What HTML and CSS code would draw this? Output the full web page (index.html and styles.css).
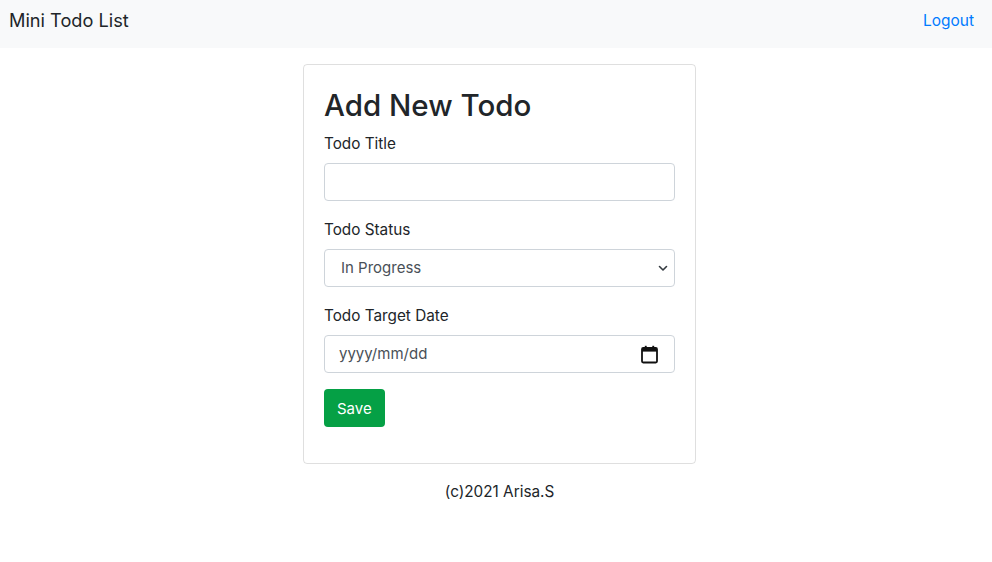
FILE: index.html
```html
<!DOCTYPE html>
<html lang="en">
<head>
<meta charset="utf-8">
<title>Mini Todo List</title>
<link rel="stylesheet" href="styles.css">
</head>
<body>
<nav class="navbar">
  <a class="brand" href="#">Mini Todo List</a>
  <a class="nav-link" href="#">Logout</a>
</nav>
<main class="main">
  <div class="card">
    <h1 class="title">Add New Todo</h1>
    <form class="form">
      <div class="form-group">
        <label class="label">Todo Title</label>
        <div class="control"></div>
      </div>
      <div class="form-group">
        <label class="label">Todo Status</label>
        <div class="control select">
          <span>In Progress</span>
          <svg class="chevron" width="10" height="8" viewBox="0 0 10 8"><path d="M1.5 2.5 L5 6 L8.5 2.5" fill="none" stroke="#343a40" stroke-width="1.6" stroke-linecap="round" stroke-linejoin="round"/></svg>
        </div>
      </div>
      <div class="form-group">
        <label class="label">Todo Target Date</label>
        <div class="control date">
          <span>yyyy/mm/dd</span>
          <svg class="cal" width="17" height="19" viewBox="0 0 17 19"><rect x="1" y="3" width="15" height="14.5" rx="1.2" fill="none" stroke="#111" stroke-width="1.8"/><rect x="1" y="3" width="15" height="3.6" fill="#111"/><rect x="3.8" y="0.8" width="1.9" height="3" fill="#111"/><rect x="11.3" y="0.8" width="1.9" height="3" fill="#111"/></svg>
        </div>
      </div>
      <button type="button" class="btn">Save</button>
    </form>
  </div>
  <footer class="footer">(c)2021 Arisa.S</footer>
</main>
</body>
</html>
```
FILE: styles.css
```css
* { box-sizing: border-box; }
body {
  margin: 0;
  font-family: Inter, "Liberation Sans", sans-serif;
  font-size: 16px;
  line-height: 1.5;
  color: #212529;
  background: #fff;
}
.navbar {
  height: 48px;
  background: #f8f9fa;
  display: flex;
  justify-content: space-between;
  align-items: center;
  padding: 0 18px 7px 9px;
}
.brand {
  font-size: 18.2px;
  color: #212529;
  text-decoration: none;
}
.nav-link {
  color: #007bff;
  font-size: 15.5px;
  text-decoration: none;
}
.main {
  display: flex;
  flex-direction: column;
  align-items: center;
  padding: 16px 0 0 7px;
}
.card {
  width: 393px;
  border: 1px solid rgba(0,0,0,.125);
  border-radius: 4px;
  padding: 20px;
}
.title {
  font-size: 29.5px;
  font-weight: 500;
  line-height: 38px;
  margin: 0 0 8px;
  padding-top: 1px;
}
.form { margin-bottom: 16px; margin-top: -1px; }
.form-group { margin-bottom: 16px; }
.label {
  display: block;
  margin-bottom: 8px;
  font-size: 15.3px;
  line-height: 24px;
  padding-top: 1px;
  height: 24px;
}
.control {
  height: 38px;
  border: 1px solid #ced4da;
  border-radius: 4px;
  padding: 0 12px;
  display: flex;
  align-items: center;
  justify-content: space-between;
  color: #495057;
  font-size: 15px;
}
.select { padding-left: 16px; padding-right: 6px; }
.date { padding-left: 14px; padding-right: 16px; }
.btn {
  background: #05a045;
  color: #fff;
  border: 0;
  border-radius: 4px;
  height: 38px;
  padding: 0 13px;
  font-family: inherit;
  font-size: 15px;
}
.footer {
  margin-top: 16px;
  font-size: 15.3px;
  padding-top: 1px;
}
```
